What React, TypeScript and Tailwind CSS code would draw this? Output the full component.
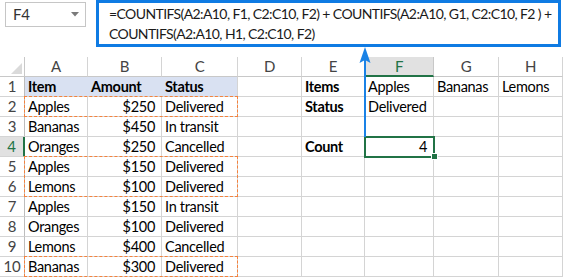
import React from "react";

const COLS = ["A", "B", "C", "D", "E", "F", "G", "H"];

type Cell = { t?: string; b?: boolean; r?: boolean; fill?: boolean };

const rows: Cell[][] = [
  [{ t: "Item", b: true, fill: true }, { t: "Amount", b: true, fill: true }, { t: "Status", b: true, fill: true }, {}, { t: "Items", b: true }, { t: "Apples" }, { t: "Bananas" }, { t: "Lemons" }],
  [{ t: "Apples" }, { t: "$250", r: true }, { t: "Delivered" }, {}, { t: "Status", b: true }, { t: "Delivered" }, {}, {}],
  [{ t: "Bananas" }, { t: "$450", r: true }, { t: "In transit" }, {}, {}, {}, {}, {}],
  [{ t: "Oranges" }, { t: "$250", r: true }, { t: "Cancelled" }, {}, { t: "Count", b: true }, { t: "4", r: true }, {}, {}],
  [{ t: "Apples" }, { t: "$150", r: true }, { t: "Delivered" }, {}, {}, {}, {}, {}],
  [{ t: "Lemons" }, { t: "$100", r: true }, { t: "Delivered" }, {}, {}, {}, {}, {}],
  [{ t: "Apples" }, { t: "$150", r: true }, { t: "In transit" }, {}, {}, {}, {}, {}],
  [{ t: "Oranges" }, { t: "$100", r: true }, { t: "Delivered" }, {}, {}, {}, {}, {}],
  [{ t: "Lemons" }, { t: "$400", r: true }, { t: "Cancelled" }, {}, {}, {}, {}, {}],
  [{ t: "Bananas" }, { t: "$300", r: true }, { t: "Delivered" }, {}, {}, {}, {}, {}],
];

export default function App() {
  return (
    <div className="relative w-[563px] h-[277px] overflow-hidden bg-white font-[family-name:Lato,sans-serif] text-[14.5px] tracking-[-0.3px] text-black">
      {/* top bar */}
      <div className="flex h-[57px] items-start">
        <div className="ml-[5px] mt-[2px] w-[81px] h-[25px] border border-[#c6c6c6] flex items-center justify-between pl-[7px] pr-[6px] text-[#333] text-[15px]">
          <span className="leading-none">F4</span>
          <svg width="8" height="5" viewBox="0 0 8 5">
            <polygon points="0,0 8,0 4,4.5" fill="#7a7a7a" />
          </svg>
        </div>
        <div className="ml-[10px] w-[465px] h-[47px] border-[3px] border-[#0f7be3] pl-[10px] pt-[1px] leading-[20px] text-[14px] tracking-[-0.6px] text-[#1a1a1a]">
          <div className="whitespace-nowrap">=COUNTIFS(A2:A10, F1, C2:C10, F2) + COUNTIFS(A2:A10, G1, C2:C10, F2 ) +</div>
          <div className="whitespace-nowrap">COUNTIFS(A2:A10, H1, C2:C10, F2)</div>
        </div>
      </div>

      {/* grid */}
      <div className="grid grid-cols-[25px_63px_74px_76px_64px_63px_69px_65px_64px] auto-rows-[20px]">
        <div className="border-r border-b border-[#c8c8c8] relative">
          <svg className="absolute right-[2px] bottom-[2px]" width="12" height="11" viewBox="0 0 12 11">
            <polygon points="12,0 12,11 1,11" fill="#dadada" />
          </svg>
        </div>
        {COLS.map((c) =>
          c === "F" ? (
            <div key={c} className="bg-[#e1e1e1] border-r border-[#c8c8c8] border-b-2 border-b-[#217346] flex items-center justify-center text-[#217346] text-[15px]">
              {c}
            </div>
          ) : (
            <div key={c} className="border-r border-b border-[#d4d4d4] border-b-[#c8c8c8] flex items-center justify-center text-[#444] text-[15px]">
              {c}
            </div>
          )
        )}
        {rows.map((row, ri) => (
          <React.Fragment key={ri}>
            {ri === 3 ? (
              <div className="bg-[#e1e1e1] border-b border-[#d4d4d4] border-r-2 border-r-[#217346] flex items-center justify-center text-[#217346] text-[15px]">
                {ri + 1}
              </div>
            ) : (
              <div className="border-b border-[#d4d4d4] border-r border-r-[#bdbdbd] flex items-center justify-center text-[#444] text-[15px]">
                {ri + 1}
              </div>
            )}
            {row.map((cell, ci) => (
              <div
                key={ci}
                className={
                  "flex items-center whitespace-nowrap overflow-hidden border-b border-r " +
                  (cell.fill ? "bg-[#d9e1f2] border-b-[#d4d4d4] " + (ci < 2 ? "border-r-[#d9e1f2] " : "border-r-[#d4d4d4] ") : "border-[#d4d4d4] ") +
                  (cell.r ? "justify-end pr-[6px] " : "pl-[3px] ") +
                  (cell.b ? "font-bold" : "")
                }
              >
                {cell.t}
              </div>
            ))}
          </React.Fragment>
        ))}
      </div>

      {/* reference highlights */}
      <div className="absolute left-[24px] top-[96px] w-[214px] h-[21px] border border-dashed border-[#f5823c]" />
      <div className="absolute left-[24px] top-[156px] w-[214px] h-[41px] border border-dashed border-[#f5823c]" />
      <div className="absolute left-[24px] top-[256px] w-[214px] h-[21px] border border-dashed border-[#f5823c]" />

      {/* selected cell */}
      <div className="absolute left-[364px] top-[136px] w-[71px] h-[22px] border-2 border-[#217346]" />
      <div className="absolute left-[431px] top-[153px] w-[7px] h-[7px] bg-[#217346] border border-white" />

      {/* arrow */}
      <svg className="absolute left-[358px] top-[44px]" width="14" height="93" viewBox="0 0 14 93">
        <line x1="7" y1="12" x2="7" y2="93" stroke="#1a82e6" strokeWidth="2" />
        <path d="M7 3 L12.5 19 L7 16 L1.5 19 Z" fill="#1a82e6" />
      </svg>
    </div>
  );
}
